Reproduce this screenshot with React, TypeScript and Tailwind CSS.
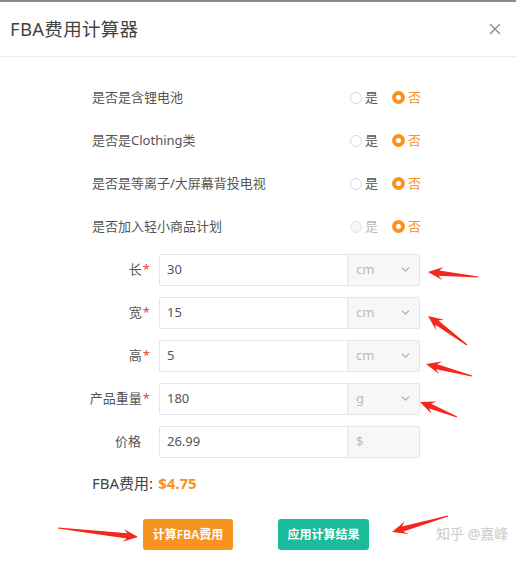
import { ChevronDown, X } from "lucide-react";

const font = { fontFamily: '"Noto Sans", "Noto Sans CJK SC", sans-serif' };

const flags = [
  { label: "是否是含锂电池", disabled: false },
  { label: "是否是Clothing类", disabled: false },
  { label: "是否是等离子/大屏幕背投电视", disabled: false },
  { label: "是否加入轻小商品计划", disabled: true },
];

const fields = [
  { label: "长", required: true, value: "30", unit: "cm", select: true },
  { label: "宽", required: true, value: "15", unit: "cm", select: true },
  { label: "高", required: true, value: "5", unit: "cm", select: true },
  { label: "产品重量", required: true, value: "180", unit: "g", select: true },
  { label: "价格", required: false, value: "26.99", unit: "$", select: false },
];

// red annotation arrows: [tailX, tailY, tipX, tipY]
const arrows: [number, number, number, number][] = [
  [478, 277, 428, 272],
  [467, 345, 428, 316],
  [472, 376, 426, 364],
  [457, 417, 420, 402],
  [58, 528, 138, 537],
  [448, 516, 392, 532],
];

function arrowPath([x1, y1, x2, y2]: [number, number, number, number]) {
  const len = Math.hypot(x2 - x1, y2 - y1);
  const dx = (x2 - x1) / len;
  const dy = (y2 - y1) / len;
  const nx = -dy;
  const ny = dx;
  const p = (a: number, b: number) => `${(x2 - dx * a + nx * b).toFixed(1)},${(y2 - dy * a + ny * b).toFixed(1)}`;
  return `M${p(len, 0.6)} L${p(11, 2.6)} L${p(15, 6.5)} L${p(0, 0)} L${p(15, -6.5)} L${p(11, -2.6)} L${p(len, -0.6)} Z`;
}

function Radio({ checked, disabled, label }: { checked: boolean; disabled?: boolean; label: string }) {
  return (
    <span className="flex items-center gap-[3px]">
      {checked ? (
        <span className="w-[13px] h-[13px] rounded-full bg-[#f7931e] flex items-center justify-center">
          <span className="w-[5px] h-[5px] rounded-full bg-white" />
        </span>
      ) : (
        <span
          className={
            "w-[12px] h-[12px] rounded-full border " +
            (disabled ? "border-[#e6e6e6] bg-[#f6f6f6]" : "border-[#d9d9d9] bg-white")
          }
        />
      )}
      <span
        className={
          "text-[13px] " + (checked ? "text-[#f7931e]" : disabled ? "text-[#bbb]" : "text-[#555]")
        }
      >
        {label}
      </span>
    </span>
  );
}

export default function App() {
  return (
    <div className="relative w-[516px] h-[561px] bg-white overflow-hidden" style={font}>
      <div className="h-[2px] bg-[#8c8c8c]" />
      <div className="h-[55px] flex items-center justify-between pl-[10px] pr-[12px] border-b border-[#ececec]">
        <h1 className="text-[18.5px] text-[#444] tracking-[0.3px]">FBA费用计算器</h1>
        <X className="w-[18px] h-[18px] text-[#8a8a8a]" strokeWidth={1.8} />
      </div>

      <div className="pl-[92px] pr-[95px] pt-[19px]">
        {flags.map((f) => (
          <div key={f.label} className="h-[43px] flex items-center justify-between">
            <span className="text-[13px] text-[#555]">{f.label}</span>
            <div className="flex items-center gap-[14px]">
              <Radio checked={false} disabled={f.disabled} label="是" />
              <Radio checked label="否" />
            </div>
          </div>
        ))}

        {fields.map((f) => (
          <div key={f.label} className="h-[43px] flex items-center">
            <div className="w-[58px] shrink-0 flex justify-end whitespace-nowrap text-[13px] text-[#555]">
              {f.label}
              <span className={f.required ? "text-[#e8453c] ml-[1px]" : "w-[9px]"}>{f.required ? "*" : ""}</span>
            </div>
            <div className="ml-[9px] w-[261px] h-[32px] flex border border-[#e6e6e6] rounded-[2px]">
              <div className="flex-1 flex items-center pl-[7px] text-[13px] text-[#555]">{f.value}</div>
              <div className="w-[72px] flex items-center justify-between pl-[8px] pr-[7px] bg-[#f7f7f7] border-l border-[#e6e6e6] text-[13px] text-[#bbb]">
                <span>{f.unit}</span>
                {f.select && <ChevronDown className="w-[13px] h-[13px] text-[#aaa]" strokeWidth={2} />}
              </div>
            </div>
          </div>
        ))}

        <div className="h-[40px] flex items-center text-[15px] text-[#444]">
          FBA费用:
          <span className="ml-[5px] font-bold text-[#f7931e]">$4.75</span>
        </div>
      </div>

      <div className="mt-[16px] flex pl-[143px] gap-[45px]">
        <button className="w-[90px] h-[31px] rounded-[3px] bg-[#f7931e] text-white text-[12px] font-semibold">
          计算FBA费用
        </button>
        <button className="w-[91px] h-[31px] rounded-[3px] bg-[#1bbc9b] text-white text-[12px] font-semibold">
          应用计算结果
        </button>
      </div>

      <div className="absolute left-[436px] top-[527px] whitespace-nowrap text-[14px] text-[#c9c9c9] leading-none">
        知乎 @嘉峰
      </div>

      <svg className="absolute inset-0 pointer-events-none" width="516" height="561">
        {arrows.map((a, i) => (
          <path key={i} d={arrowPath(a)} fill="#f5261b" />
        ))}
      </svg>
    </div>
  );
}
